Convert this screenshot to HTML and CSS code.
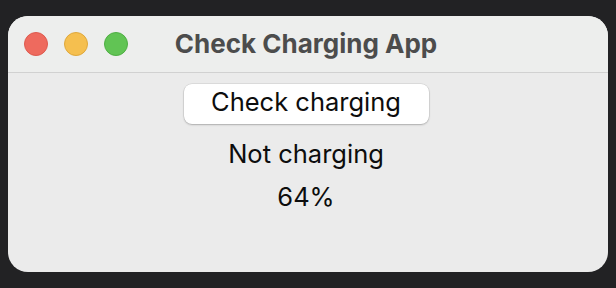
FILE: index.html
```html
<!DOCTYPE html>
<html lang="en">
<head>
<meta charset="utf-8">
<title>Check Charging App</title>
<link rel="stylesheet" href="styles.css">
</head>
<body>
<div class="window">
  <div class="titlebar">
    <div class="lights">
      <span class="light red"></span>
      <span class="light yellow"></span>
      <span class="light green"></span>
    </div>
    <div class="title">Check Charging App</div>
    <div class="spacer"></div>
  </div>
  <div class="content">
    <button class="btn">Check charging</button>
    <div class="label status">Not charging</div>
    <div class="label percent">64%</div>
  </div>
</div>
</body>
</html>
```
FILE: styles.css
```css
html, body {
  margin: 0;
  padding: 0;
}
body {
  background: #222224;
  width: 616px;
  height: 288px;
  padding: 16px 8px 0 8px;
  box-sizing: border-box;
  font-family: Inter, "Liberation Sans", sans-serif;
}
.window {
  width: 600px;
  height: 256px;
  background: #ebebeb;
  border-radius: 20px;
  overflow: hidden;
  display: flex;
  flex-direction: column;
}
.titlebar {
  height: 56px;
  flex: 0 0 56px;
  background: #edeeed;
  border-bottom: 1px solid #d1d1d1;
  display: grid;
  grid-template-columns: 1fr auto 1fr;
  align-items: center;
  padding-right: 4px;
}
.lights {
  display: flex;
  gap: 16px;
  padding-left: 16px;
}
.light {
  width: 24px;
  height: 24px;
  border-radius: 50%;
  box-sizing: border-box;
}
.red { background: #ee6a5e; border: 1px solid #dd5a4f; }
.yellow { background: #f5bf4f; border: 1px solid #dea73c; }
.green { background: #61c454; border: 1px solid #4fae44; }
.title {
  font-weight: 700;
  font-size: 26px;
  color: #4c4c4c;
  padding-bottom: 2px;
}
.content {
  display: flex;
  flex-direction: column;
  align-items: center;
  padding-top: 11px;
  padding-right: 4px;
}
.btn {
  width: 245px;
  height: 40px;
  background: #ffffff;
  border: none;
  border-radius: 8px;
  box-shadow: 0 0 0 0.5px rgba(0,0,0,0.12), 0 1px 2px rgba(0,0,0,0.22);
  font-family: Inter, "Liberation Sans", sans-serif;
  font-size: 25.5px;
  color: #0d0d0d;
  line-height: 36px;
  padding: 0 0 4px 0;
}
.label {
  font-size: 25.5px;
  line-height: 43px;
  color: #0d0d0d;
}
.status {
  margin-top: 8px;
}
```
